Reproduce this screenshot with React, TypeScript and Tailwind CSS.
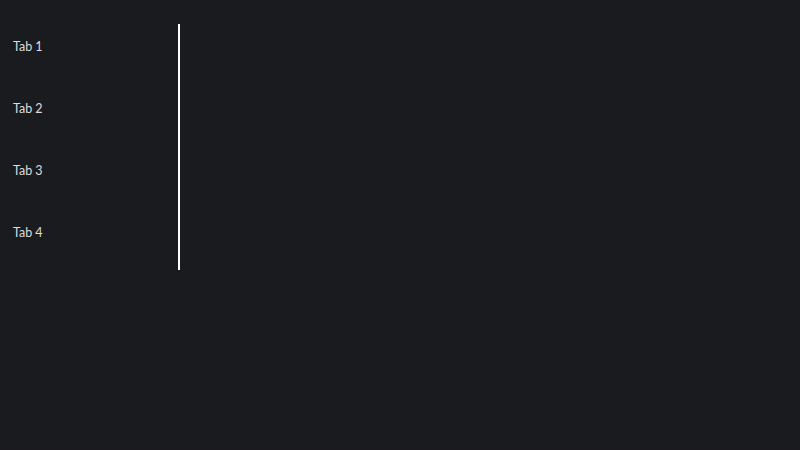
const tabs = ["Tab 1", "Tab 2", "Tab 3", "Tab 4"];

export default function App() {
  return (
    <div
      className="flex h-[450px] w-[800px] items-start bg-[#1a1b1f] text-[#dcdcdf]"
      style={{ fontFamily: "Lato, 'Noto Sans', sans-serif" }}
    >
      {/* Tab list */}
      <div className="flex w-[178px] flex-col pt-[16px]">
        {tabs.map((t) => (
          <div key={t} className="flex h-[62px] items-center pl-[13px] text-[12.5px]">
            {t}
          </div>
        ))}
      </div>
      {/* Divider */}
      <div className="mt-[24px] h-[246px] w-[2px] bg-white" />
    </div>
  );
}
